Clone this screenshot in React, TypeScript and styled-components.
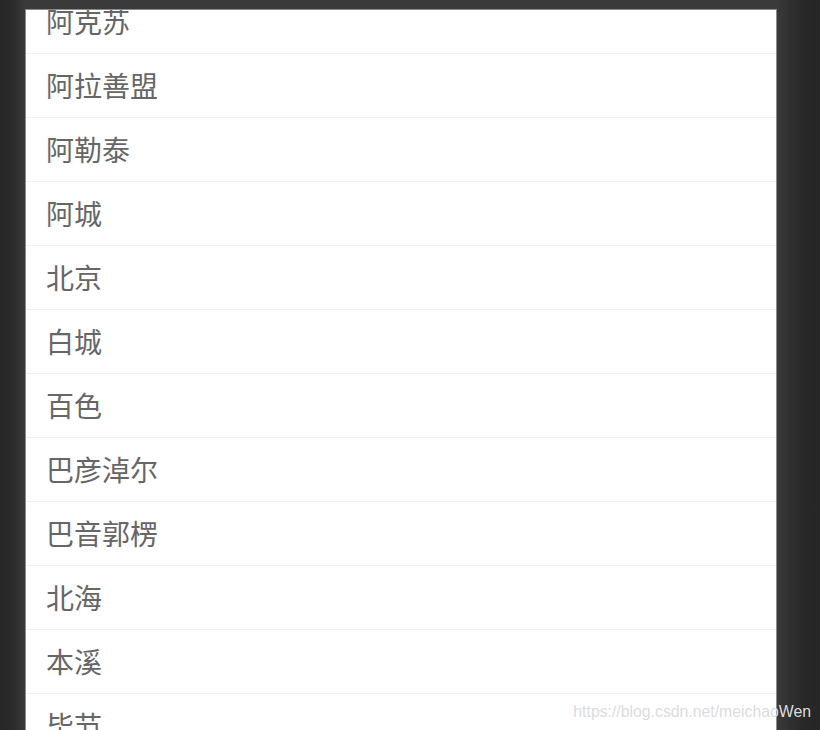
import React, { useLayoutEffect, useRef } from 'react';
import styled, { createGlobalStyle } from 'styled-components';

const GlobalStyle = createGlobalStyle`
  html, body {
    margin: 0;
    padding: 0;
    height: 100%;
  }
  body {
    font-family: "Noto Sans CJK SC", "Noto Sans", sans-serif;
    background: #2a2a2a;
    overflow: hidden;
  }
`;

const Screen = styled.div`
  position: relative;
  width: 820px;
  height: 730px;
  box-sizing: border-box;
  padding: 9px 43px 0 25px;
  background: linear-gradient(
    to right,
    #262626 0px,
    #2c2c2c 14px,
    #3a3a3a 25px,
    #3a3a3a 777px,
    #303030 790px,
    #282828 805px,
    #262626 820px
  );
  display: flex;
`;

const Panel = styled.div`
  flex: 1;
  background: #ffffff;
  border: 1px solid #8a8a8a;
  border-bottom: none;
  overflow: hidden;
`;

const CityList = styled.ul`
  list-style: none;
  margin: 0;
  padding: 0;
`;

const CityRow = styled.li`
  height: 63px;
  box-sizing: content-box;
  display: flex;
  align-items: center;
  padding: 0 0 0 20px;
  border-bottom: 1px solid #f0f0f0;
  font-size: 28px;
  line-height: 1;
  color: #666666;
`;

const CityName = styled.span`
  position: relative;
  top: -1px;
`;

const Watermark = styled.div`
  position: absolute;
  right: 9px;
  bottom: 9px;
  font-family: "Liberation Sans", Arial, sans-serif;
  font-size: 15.8px;
  color: #dcdcdc;
  pointer-events: none;
`;

const cities = [
  '阿克苏',
  '阿拉善盟',
  '阿勒泰',
  '阿城',
  '北京',
  '白城',
  '百色',
  '巴彦淖尔',
  '巴音郭楞',
  '北海',
  '本溪',
  '毕节',
  '滨州',
  '保定',
  '宝鸡',
];

const App: React.FC = () => {
  const panelRef = useRef<HTMLDivElement>(null);

  useLayoutEffect(() => {
    if (panelRef.current) {
      panelRef.current.scrollTop = 20;
    }
  }, []);

  return (
    <>
      <GlobalStyle />
      <Screen>
        <Panel ref={panelRef}>
          <CityList>
            {cities.map((city) => (
              <CityRow key={city}>
                <CityName>{city}</CityName>
              </CityRow>
            ))}
          </CityList>
        </Panel>
        <Watermark>https://blog.csdn.net/meichaoWen</Watermark>
      </Screen>
    </>
  );
};

export default App;
